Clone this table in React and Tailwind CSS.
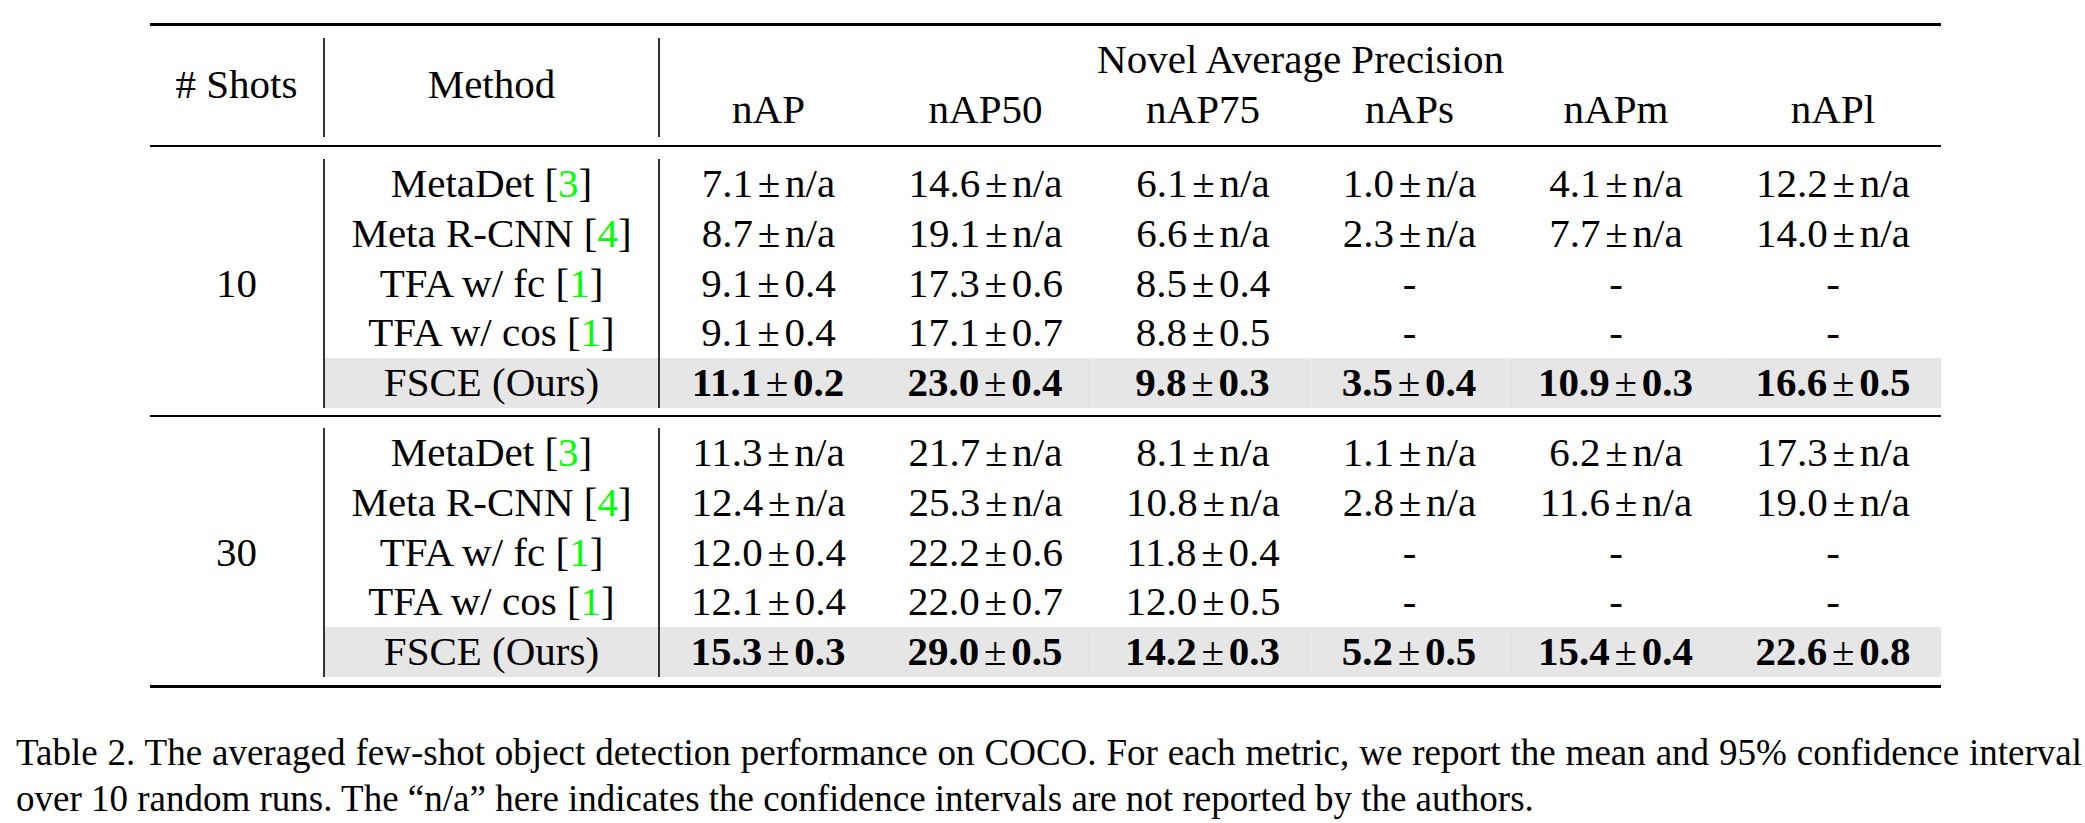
const methods = [
  { name: 'MetaDet', ref: '3' },
  { name: 'Meta R-CNN', ref: '4' },
  { name: 'TFA w/ fc', ref: '1' },
  { name: 'TFA w/ cos', ref: '1' },
]

const groups = [
  {
    shots: '10',
    rows: [
      ['7.1', 'n/a', '14.6', 'n/a', '6.1', 'n/a', '1.0', 'n/a', '4.1', 'n/a', '12.2', 'n/a'],
      ['8.7', 'n/a', '19.1', 'n/a', '6.6', 'n/a', '2.3', 'n/a', '7.7', 'n/a', '14.0', 'n/a'],
      ['9.1', '0.4', '17.3', '0.6', '8.5', '0.4', '-', '', '-', '', '-', ''],
      ['9.1', '0.4', '17.1', '0.7', '8.8', '0.5', '-', '', '-', '', '-', ''],
    ],
    ours: ['11.1', '0.2', '23.0', '0.4', '9.8', '0.3', '3.5', '0.4', '10.9', '0.3', '16.6', '0.5'],
  },
  {
    shots: '30',
    rows: [
      ['11.3', 'n/a', '21.7', 'n/a', '8.1', 'n/a', '1.1', 'n/a', '6.2', 'n/a', '17.3', 'n/a'],
      ['12.4', 'n/a', '25.3', 'n/a', '10.8', 'n/a', '2.8', 'n/a', '11.6', 'n/a', '19.0', 'n/a'],
      ['12.0', '0.4', '22.2', '0.6', '11.8', '0.4', '-', '', '-', '', '-', ''],
      ['12.1', '0.4', '22.0', '0.7', '12.0', '0.5', '-', '', '-', '', '-', ''],
    ],
    ours: ['15.3', '0.3', '29.0', '0.5', '14.2', '0.3', '5.2', '0.5', '15.4', '0.4', '22.6', '0.8'],
  },
]

const metrics = ['nAP', 'nAP50', 'nAP75', 'nAPs', 'nAPm', 'nAPl']

const cols = 'grid grid-cols-[175px_335px_217px_217px_218px_195px_218px_216px]'

function Value({ mean, ci, bold }) {
  if (mean === '-') return <span>-</span>
  return (
    <span className={bold ? 'font-bold' : ''}>
      {mean}
      <span className="inline-block w-[0.78em] text-center font-normal">±</span>
      {ci}
    </span>
  )
}

function Cell({ children, className = '' }) {
  return (
    <div className={`h-[49.8px] leading-[49.8px] text-center whitespace-nowrap ${className}`}>
      {children}
    </div>
  )
}

function Group({ group }) {
  return (
    <div className={cols}>
      <div className="row-span-5 flex items-center justify-center border-r-2 border-[#333]">
        {group.shots}
      </div>
      {group.rows.map((row, i) => (
        <div key={i} className="contents">
          <Cell className="border-r-2 border-[#333]">
            {methods[i].name} [<span className="text-[#00ff00]">{methods[i].ref}</span>]
          </Cell>
          {[0, 1, 2, 3, 4, 5].map((j) => (
            <Cell key={j}>
              <Value mean={row[j * 2]} ci={row[j * 2 + 1]} />
            </Cell>
          ))}
        </div>
      ))}
      <Cell className="border-r-2 border-[#333] bg-[#e6e6e6]">FSCE (Ours)</Cell>
      {[0, 1, 2, 3, 4, 5].map((j) => (
        <Cell key={j} className={`bg-[#e6e6e6] ${j < 5 ? 'border-r border-[#ececec]' : ''}`}>
          <Value mean={group.ours[j * 2]} ci={group.ours[j * 2 + 1]} bold />
        </Cell>
      ))}
    </div>
  )
}

export default function App() {
  return (
    <div className="w-[2085px] h-[823px] bg-white text-black font-['Liberation_Serif',serif] overflow-hidden">
      <div className="pt-[23px] pl-[150px] w-[1941px] text-[41px]">
        <div className="h-[3px] bg-black" />
        <div className={`${cols} pt-[12px] pb-[8px]`}>
          <div className="row-span-2 flex items-center justify-center pb-[6px] border-r-2 border-[#333]">
            # Shots
          </div>
          <div className="row-span-2 flex items-center justify-center pb-[6px] border-r-2 border-[#333]">
            Method
          </div>
          <div className="col-span-6 h-[49.5px] flex items-center justify-center pb-[6px]">
            Novel Average Precision
          </div>
          {metrics.map((m) => (
            <div key={m} className="h-[49.5px] flex items-center justify-center pb-[6px]">
              {m}
            </div>
          ))}
        </div>
        <div className="h-[2px] bg-black" />
        <div className="pt-[12px] pb-[7px]">
          <Group group={groups[0]} />
        </div>
        <div className="h-[2px] bg-black" />
        <div className="pt-[11px] pb-[8px]">
          <Group group={groups[1]} />
        </div>
        <div className="h-[3px] bg-black" />
      </div>
      <div className="pt-[42px] pl-[16px] w-[2082px] text-[37px] leading-[46px]">
        <div className="text-justify [text-align-last:justify]">
          Table 2. The averaged few-shot object detection performance on COCO. For each metric, we report the mean and 95% confidence interval
        </div>
        <div>
          over 10 random runs. The “n/a” here indicates the confidence intervals are not reported by the authors.
        </div>
      </div>
    </div>
  )
}
